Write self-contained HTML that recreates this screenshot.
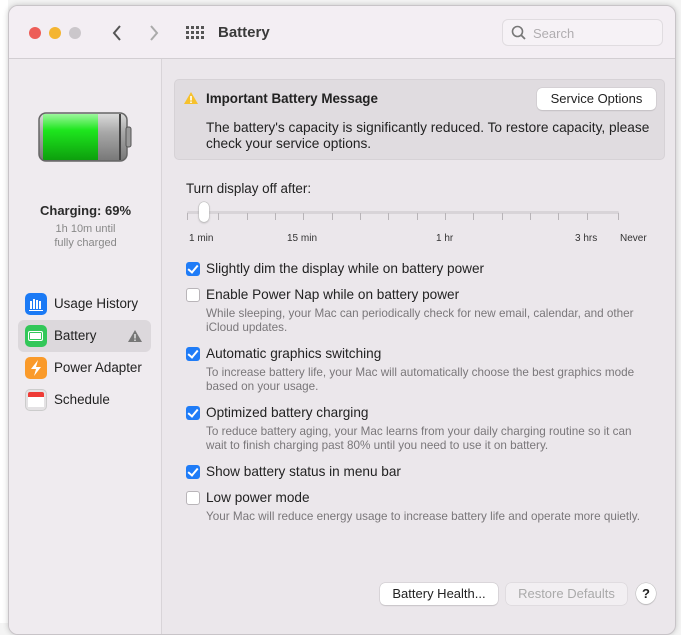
<!DOCTYPE html>
<html><head><style>
*{margin:0;padding:0;box-sizing:border-box}
body{width:681px;height:623px;overflow:hidden;background:#f4f4f4;font-family:"Liberation Sans",sans-serif;font-size:13px;color:#222;position:relative}
.win{position:absolute;left:8px;top:5px;width:668px;height:630px;background:#ebe7eb;border:1px solid #c8c4c8;border-radius:10px;overflow:hidden;box-shadow:0 0 6px rgba(0,0,0,.2)}
.title{position:absolute;left:0;top:0;width:100%;height:53px;background:#f3eef3;border-bottom:1px solid #d2ced2}
.dot{position:absolute;top:21px;width:12px;height:12px;border-radius:50%}
.side{position:absolute;left:0;top:53px;width:153px;bottom:0;background:#efebef;border-right:1px solid #d8d4d8}
.abs{position:absolute}
.cb{position:absolute;left:177px;width:14px;height:14px;border-radius:3px}
.on{background:#1f7cf7}
.off{background:#fff;border:1px solid #b9b5b9}
.lbl{position:absolute;left:197px;font-size:13.6px;color:#222}
.sub{position:absolute;left:197px;font-size:11.7px;color:#7a777a;line-height:14px}
.tick{position:absolute;top:207px;width:1px;height:7px;background:#b8b4b8}
.tl{position:absolute;top:227px;font-size:10px;color:#333}
.btn{position:absolute;height:22px;border-radius:5px;font-size:13px;text-align:center;line-height:21px}
</style></head><body>
<div class="abs" style="left:0;top:0;width:8px;height:623px;background:#fff"></div>
<div class="win">
 <div class="title">
  <div class="dot" style="left:20px;background:#ed5d58"></div>
  <div class="dot" style="left:40px;background:#f4b531"></div>
  <div class="dot" style="left:60px;background:#cbc7cb"></div>
  <svg class="abs" style="left:102px;top:18px" width="12" height="18"><path d="M9 2L3 9l6 7" stroke="#555" stroke-width="2" fill="none"/></svg>
  <svg class="abs" style="left:139px;top:18px" width="12" height="18"><path d="M3 2l6 7-6 7" stroke="#aaa" stroke-width="2" fill="none"/></svg>
  <svg class="abs" style="left:176px;top:19px" width="20" height="16" fill="#555">
   <rect x="1" y="1" width="3" height="3"/><rect x="6" y="1" width="3" height="3"/><rect x="11" y="1" width="3" height="3"/><rect x="16" y="1" width="3" height="3"/>
   <rect x="1" y="6" width="3" height="3"/><rect x="6" y="6" width="3" height="3"/><rect x="11" y="6" width="3" height="3"/><rect x="16" y="6" width="3" height="3"/>
   <rect x="1" y="11" width="3" height="3"/><rect x="6" y="11" width="3" height="3"/><rect x="11" y="11" width="3" height="3"/><rect x="16" y="11" width="3" height="3"/>
  </svg>
  <div class="abs" style="left:209px;top:18px;font-size:15px;font-weight:bold;color:#3a3a3a">Battery</div>
  <div class="abs" style="left:493px;top:13px;width:161px;height:27px;border:1px solid #e0dce0;border-radius:6px;background:#f6f2f6"></div>
  <svg class="abs" style="left:502px;top:19px" width="16" height="16"><circle cx="6.5" cy="6.5" r="5" stroke="#777" stroke-width="1.6" fill="none"/><path d="M10 10l4 4" stroke="#777" stroke-width="1.8"/></svg>
  <div class="abs" style="left:524px;top:20px;font-size:13px;color:#b0adb0">Search</div>
 </div>
 <div class="side">
  <svg class="abs" style="left:28px;top:52px" width="96" height="54">
   <defs><linearGradient id="g" x1="0" y1="0" x2="0" y2="1"><stop offset="0" stop-color="#9cf79c"/><stop offset=".35" stop-color="#1ee61e"/><stop offset="1" stop-color="#0d9f0d"/></linearGradient>
   <linearGradient id="s" x1="0" y1="0" x2="0" y2="1"><stop offset="0" stop-color="#ddd"/><stop offset=".4" stop-color="#a8a8a8"/><stop offset="1" stop-color="#777"/></linearGradient></defs>
   <rect x="2" y="2" width="88" height="48" rx="7" fill="url(#s)"/>
   <rect x="6" y="3" width="55" height="46" fill="url(#g)"/>
   <rect x="2" y="2" width="88" height="48" rx="7" fill="none" stroke="#666" stroke-width="1.5"/>
   <rect x="82" y="3" width="2" height="46" fill="#444"/>
   <rect x="89" y="16" width="5" height="20" rx="2" fill="#999" stroke="#555"/>
  </svg>
  <div class="abs" style="left:0;width:153px;top:144px;text-align:center;font-weight:bold;font-size:13px;color:#2a2a2a">Charging: 69%</div>
  <div class="abs" style="left:0;width:153px;top:163px;text-align:center;font-size:11px;color:#888;line-height:14px">1h 10m until<br>fully charged</div>
  <div class="abs" style="left:9px;top:261px;width:133px;height:32px;border-radius:6px;background:#dcd8dc"></div>
  <div class="abs" style="left:16px;top:234px;width:22px;height:22px;border-radius:5px;background:#1b7af5"></div>
  <svg class="abs" style="left:16px;top:234px" width="22" height="22" fill="#fff"><rect x="5" y="8" width="2" height="8"/><rect x="8" y="6" width="2" height="10"/><rect x="11" y="7" width="2" height="9"/><rect x="14" y="8" width="2" height="8"/><rect x="4" y="17" width="14" height="1"/></svg>
  <div class="abs" style="left:45px;top:237px;font-size:13.4px">Usage History</div>
  <div class="abs" style="left:16px;top:266px;width:22px;height:22px;border-radius:5px;background:#32c759"></div>
  <div class="abs" style="left:19px;top:272px;width:15px;height:10px;border:1.5px solid #fff;border-radius:2px;background:#fff;box-shadow:inset 0 0 0 1px #32c759"></div>
  <div class="abs" style="left:45px;top:269px;font-size:13.4px">Battery</div>
  <svg class="abs" style="left:118px;top:270px" width="16" height="14"><path d="M8 1L15 13H1z" fill="#777"/><rect x="7.2" y="5" width="1.6" height="4.5" fill="#ddd"/><rect x="7.2" y="10.5" width="1.6" height="1.5" fill="#ddd"/></svg>
  <div class="abs" style="left:16px;top:298px;width:22px;height:22px;border-radius:5px;background:#fa9a2a"></div>
  <svg class="abs" style="left:16px;top:298px" width="22" height="22"><path d="M13 3L6 12h5l-2 7 7-9h-5z" fill="#fff"/></svg>
  <div class="abs" style="left:45px;top:301px;font-size:13.4px">Power Adapter</div>
  <div class="abs" style="left:16px;top:330px;width:22px;height:22px;border-radius:5px;background:#e4e2e4;border:1px solid #ccc"></div>
  <div class="abs" style="left:19px;top:333px;width:16px;height:5px;border-radius:2px 2px 0 0;background:#ee3b36"></div>
  <div class="abs" style="left:19px;top:338px;width:16px;height:10px;background:#fff"></div>
  <div class="abs" style="left:45px;top:333px;font-size:13.4px">Schedule</div>
 </div>
 <div class="abs" style="left:165px;top:73px;width:491px;height:81px;background:#e0dce0;border:1px solid #d6d2d6;border-radius:5px"></div>
 <svg class="abs" style="left:174px;top:85px" width="16" height="14"><path d="M8 1L15 13H1z" fill="#f6c12c"/><rect x="7.2" y="5" width="1.6" height="4.5" fill="#fff"/><rect x="7.2" y="10.5" width="1.6" height="1.5" fill="#fff"/></svg>
 <div class="abs" style="left:197px;top:85px;font-weight:bold;font-size:13.4px">Important Battery Message</div>
 <div class="btn" style="left:528px;top:82px;width:119px;background:#fff;box-shadow:0 0 0 .5px #c8c4c8,0 1px 1px rgba(0,0,0,.15)">Service Options</div>
 <div class="abs" style="left:197px;top:114px;font-size:13.7px;line-height:16px">The battery's capacity is significantly reduced. To restore capacity, please<br>check your service options.</div>
 <div class="abs" style="left:177px;top:175px;font-size:13.4px">Turn display off after:</div>
 <div class="abs" style="left:178px;top:205px;width:432px;height:3px;background:#d8d4d8;border-radius:2px"></div>
 <div class="tick" style="left:178px"></div><div class="tick" style="left:209px"></div><div class="tick" style="left:238px"></div><div class="tick" style="left:266px"></div><div class="tick" style="left:294px"></div><div class="tick" style="left:323px"></div><div class="tick" style="left:351px"></div><div class="tick" style="left:379px"></div><div class="tick" style="left:408px"></div><div class="tick" style="left:436px"></div><div class="tick" style="left:464px"></div><div class="tick" style="left:493px"></div><div class="tick" style="left:521px"></div><div class="tick" style="left:549px"></div><div class="tick" style="left:578px"></div><div class="tick" style="left:609px"></div>
 <div class="abs" style="left:190px;top:196px;width:10px;height:20px;border-radius:5px;background:#fff;box-shadow:0 0 0 .5px #bbb,0 1px 2px rgba(0,0,0,.25)"></div>
 <div class="tl" style="left:180px">1 min</div><div class="tl" style="left:278px">15 min</div><div class="tl" style="left:427px">1 hr</div><div class="tl" style="left:566px">3 hrs</div><div class="tl" style="left:611px">Never</div>

 <div class="cb on" style="top:256px"></div><div class="lbl" style="top:255px">Slightly dim the display while on battery power</div>
 <div class="cb off" style="top:282px"></div><div class="lbl" style="top:281px">Enable Power Nap while on battery power</div>
 <div class="sub" style="top:301px">While sleeping, your Mac can periodically check for new email, calendar, and other<br>iCloud updates.</div>
 <div class="cb on" style="top:341px"></div><div class="lbl" style="top:340px">Automatic graphics switching</div>
 <div class="sub" style="top:360px">To increase battery life, your Mac will automatically choose the best graphics mode<br>based on your usage.</div>
 <div class="cb on" style="top:400px"></div><div class="lbl" style="top:399px">Optimized battery charging</div>
 <div class="sub" style="top:419px">To reduce battery aging, your Mac learns from your daily charging routine so it can<br>wait to finish charging past 80% until you need to use it on battery.</div>
 <div class="cb on" style="top:459px"></div><div class="lbl" style="top:458px">Show battery status in menu bar</div>
 <div class="cb off" style="top:485px"></div><div class="lbl" style="top:484px">Low power mode</div>
 <div class="sub" style="top:504px">Your Mac will reduce energy usage to increase battery life and operate more quietly.</div>

 <div class="btn" style="left:371px;top:577px;width:118px;background:#fff;box-shadow:0 0 0 .5px #c8c4c8,0 1px 1px rgba(0,0,0,.15)">Battery Health...</div>
 <div class="btn" style="left:497px;top:577px;width:121px;background:#f2eff2;color:#aaa;box-shadow:0 0 0 .5px #d6d2d6">Restore Defaults</div>
 <div class="abs" style="left:627px;top:577px;width:20px;height:21px;border-radius:50%;background:#fff;box-shadow:0 0 0 .5px #bbb,0 1px 1px rgba(0,0,0,.2);text-align:center;font-weight:bold;font-size:13px;line-height:21px">?</div>
</div>
<style>.cb.on::after{content:"";position:absolute;left:4px;top:1px;width:4px;height:8px;border:solid #fff;border-width:0 2px 2px 0;transform:rotate(40deg)}</style>
</body></html>
